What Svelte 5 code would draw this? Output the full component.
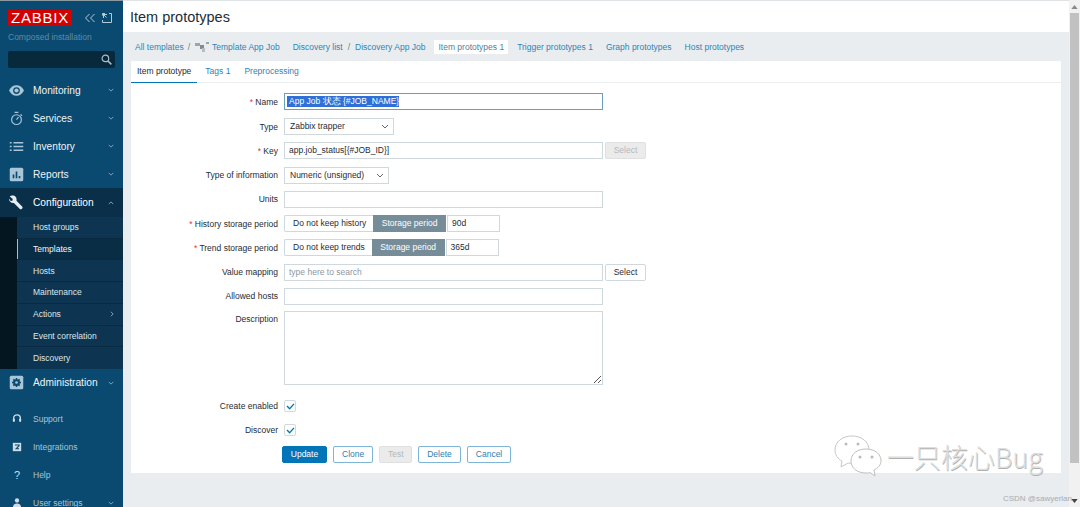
<script>
	const topMenu = [
		{ label: 'Monitoring', icon: 'eye' },
		{ label: 'Services', icon: 'clock' },
		{ label: 'Inventory', icon: 'list' },
		{ label: 'Reports', icon: 'chart' }
	];
	const subMenu = [
		{ label: 'Host groups' },
		{ label: 'Templates', current: true },
		{ label: 'Hosts' },
		{ label: 'Maintenance' },
		{ label: 'Actions', arrow: true },
		{ label: 'Event correlation' },
		{ label: 'Discovery' }
	];
	const navTabs = [
		{ label: 'Item prototypes 1', active: true },
		{ label: 'Trigger prototypes 1' },
		{ label: 'Graph prototypes' },
		{ label: 'Host prototypes' }
	];
</script>

{#snippet chevron(up)}
	<svg class="chev" viewBox="0 0 8 5" width="6" height="4">
		<path d={up ? 'M1 4 4 1l3 3' : 'M1 1l3 3 3-3'} fill="none" stroke="currentColor" stroke-width="1.2" />
	</svg>
{/snippet}

{#snippet menuIcon(name)}
	<svg class="micon" viewBox="0 0 20 20" width="20" height="20">
		{#if name === 'eye'}
			<path d="M0 10c2.500-4.500 5.800-7 10-7s7.500 2.500 10 7c-2.500 4.500-5.800 7-10 7s-7.500-2.500-10-7z" fill="currentColor" />
			<circle cx="10" cy="10" r="4.500" fill="#0b4a70" />
			<circle cx="10" cy="10" r="2.800" fill="currentColor" />
		{:else if name === 'clock'}
			<circle cx="10" cy="11.500" r="6.500" fill="none" stroke="currentColor" stroke-width="1.600" />
			<path d="M7.500 1.800h5M10 11.500l2.800-3.500M15.500 4.500l1.800 1.800" fill="none" stroke="currentColor" stroke-width="1.600" />
		{:else if name === 'list'}
			<path d="M1 5h2.500M1 10h2.500M1 15h2.500M6 5h13M6 10h13M6 15h13" fill="none" stroke="currentColor" stroke-width="2" />
		{:else if name === 'chart'}
			<rect x="1" y="1" width="18" height="18" rx="2" fill="currentColor" />
			<path d="M6 15v-5M10 15V6M14 15v-3" fill="none" stroke="#0b4a70" stroke-width="2.200" />
		{/if}
	</svg>
{/snippet}

<div class="page">
	<aside class="sidebar">
		<div class="brand">
			<div class="logo">ZABBIX</div>
			<svg class="collapse" viewBox="0 0 12 10" width="12" height="10">
				<path d="M5.500 1 1.500 5l4 4M10.500 1l-4 4 4 4" fill="none" stroke="currentColor" stroke-width="1" />
			</svg>
			<svg class="kiosk" viewBox="0 0 10 10" width="10" height="10">
				<path d="M3 .5H.5v2M7 .5h2.500v9H.5V7" fill="none" stroke="currentColor" stroke-width="1" />
				<path d="M1 1l3.500 3.500M1.500 5V1.500H5" fill="none" stroke="currentColor" stroke-width="1" />
			</svg>
		</div>
		<div class="server">Composed installation</div>
		<div class="search">
			<svg viewBox="0 0 12 12" width="11" height="11">
				<circle cx="4.800" cy="4.800" r="3.600" fill="none" stroke="currentColor" stroke-width="1.300" />
				<path d="M7.500 7.500 11.300 11.300" stroke="currentColor" stroke-width="1.600" />
			</svg>
		</div>

		<nav class="menu">
			{#each topMenu as item}
				<div class="mitem">
					{@render menuIcon(item.icon)}
					<span class="mlabel">{item.label}</span>
					{@render chevron(false)}
				</div>
			{/each}
			<div class="mitem open">
				<svg class="micon wrench" viewBox="0 0 20 20" width="20" height="20">
					<path d="M6 .8C3.800.3 2 .8 1 2l4 3.200-.5 2.300-2.300.5L.3 4.500C-.5 8 2.500 11 6.500 10.500l8 8.300c1.500 1.300 4.500-1.300 3.300-3.200L10 7.500C10.500 4 9 1.500 6 .8z" fill="currentColor" />
				</svg>
				<span class="mlabel">Configuration</span>
				{@render chevron(true)}
			</div>
			<div class="submenu">
				{#each subMenu as sub}
					<div class="sitem" class:current={sub.current}>
						<span>{sub.label}</span>
						{#if sub.arrow}
							<svg class="chev" viewBox="0 0 5 8" width="4" height="6">
								<path d="M1 1l3 3-3 3" fill="none" stroke="currentColor" stroke-width="1.200" />
							</svg>
						{/if}
					</div>
				{/each}
			</div>
			<div class="mitem admin">
				<svg class="micon" viewBox="0 0 20 20" width="20" height="20">
					<rect x="1" y="1" width="18" height="18" rx="2" fill="currentColor" />
					<circle cx="10" cy="10" r="4.500" fill="#0b4a70" />
					<path d="M10 4v3M10 13v3M4 10h3M13 10h3M5.800 5.800l2 2M12.200 12.200l2 2M14.200 5.800l-2 2M7.800 12.200l-2 2" stroke="#0b4a70" stroke-width="2" />
					<circle cx="10" cy="10" r="1.800" fill="currentColor" />
				</svg>
				<span class="mlabel">Administration</span>
				{@render chevron(false)}
			</div>
		</nav>

		<div class="user-menu">
			<div class="uitem">
				<svg viewBox="0 0 12 12" width="12" height="12">
					<path d="M2 7V5a4 4 0 0 1 8 0v2" fill="none" stroke="currentColor" stroke-width="1.600" />
					<rect x="1" y="5.500" width="2.500" height="4" rx="1" fill="currentColor" />
					<rect x="8.500" y="5.500" width="2.500" height="4" rx="1" fill="currentColor" />
				</svg>
				<span>Support</span>
			</div>
			<div class="uitem">
				<svg viewBox="0 0 12 12" width="12" height="12">
					<rect x="1" y="1" width="10" height="10" fill="currentColor" />
					<path d="M3.500 3.500h5v1L5 8h3.500" fill="none" stroke="#0b4a70" stroke-width="1.300" />
				</svg>
				<span>Integrations</span>
			</div>
			<div class="uitem">
				<b class="q">?</b>
				<span>Help</span>
			</div>
			<div class="uitem">
				<svg viewBox="0 0 12 12" width="12" height="12">
					<circle cx="6" cy="3" r="2.600" fill="currentColor" />
					<path d="M1 12c0-4 2-5.500 5-5.500s5 1.500 5 5.500z" fill="currentColor" />
				</svg>
				<span>User settings</span>
				{@render chevron(false)}
			</div>
		</div>
	</aside>

	<main class="content">
		<header class="title"><h1>Item prototypes</h1></header>

		<div class="crumbs">
			<a href="#t">All templates</a>
			<span class="sep">/</span>
			<svg class="tpl" viewBox="0 0 14 10" width="14" height="10">
				<rect x="0" y="1" width="5" height="3" fill="#9aa7b0" />
				<rect x="5" y="3" width="4" height="4" fill="#7d8b96" />
				<rect x="7" y="6" width="3" height="4" fill="#b4bec6" />
				<rect x="11" y="0" width="3" height="2" fill="#9aa7b0" />
			</svg>
			<a class="tname" href="#t">Template App Job</a>
			<a class="gap" href="#t">Discovery list</a>
			<span class="sep wide-sep">/</span>
			<a href="#t">Discovery App Job</a>
			{#each navTabs as tab}
				<a class="navtab" class:active={tab.active} href="#t">{tab.label}</a>
			{/each}
		</div>

		<section class="card">
			<div class="tabs">
				<span class="tab active">Item prototype</span>
				<span class="tab">Tags 1</span>
				<span class="tab">Preprocessing</span>
			</div>

			<form class="form">
				<div class="row first">
					<label class="lbl"><i>*</i> Name</label>
					<div class="field name"><span class="sel">App Job 状态 {'{'}#JOB_NAME{'}'}</span></div>
				</div>
				<div class="row">
					<label class="lbl">Type</label>
					<div class="field select w110">Zabbix trapper<svg class="chev" viewBox="0 0 8 5" width="8" height="5"><path d="M1 1l3 3 3-3" fill="none" stroke="currentColor" stroke-width="1" /></svg></div>
				</div>
				<div class="row">
					<label class="lbl"><i>*</i> Key</label>
					<div class="field wide">app.job_status[{'{'}#JOB_ID{'}'}]</div>
					<span class="btn2 off">Select</span>
				</div>
				<div class="row">
					<label class="lbl">Type of information</label>
					<div class="field select w105">Numeric (unsigned)<svg class="chev" viewBox="0 0 8 5" width="8" height="5"><path d="M1 1l3 3 3-3" fill="none" stroke="currentColor" stroke-width="1" /></svg></div>
				</div>
				<div class="row">
					<label class="lbl">Units</label>
					<div class="field wide"></div>
				</div>
				<div class="row">
					<label class="lbl"><i>*</i> History storage period</label>
					<div class="seg">
						<span>Do not keep history</span><span class="on">Storage period</span>
					</div>
					<div class="field period">90d</div>
				</div>
				<div class="row">
					<label class="lbl"><i>*</i> Trend storage period</label>
					<div class="seg">
						<span>Do not keep trends</span><span class="on">Storage period</span>
					</div>
					<div class="field period">365d</div>
				</div>
				<div class="row">
					<label class="lbl">Value mapping</label>
					<div class="field wide ph">type here to search</div>
					<span class="btn2">Select</span>
				</div>
				<div class="row hosts">
					<label class="lbl">Allowed hosts</label>
					<div class="field wide"></div>
				</div>
				<div class="row top">
					<label class="lbl">Description</label>
					<div class="field wide area">
						<svg viewBox="0 0 8 8" width="8" height="8"><path d="M8 1 1 8M8 5 5 8" stroke="#555" stroke-width="1" /></svg>
					</div>
				</div>
				<div class="row check first-check">
					<label class="lbl">Create enabled</label>
					<span class="box"><svg viewBox="0 0 10 8" width="9" height="7"><path d="M1 3.500 4 6.500 9 1" fill="none" stroke="#0275b8" stroke-width="1.500" /></svg></span>
				</div>
				<div class="row check">
					<label class="lbl">Discover</label>
					<span class="box"><svg viewBox="0 0 10 8" width="9" height="7"><path d="M1 3.500 4 6.500 9 1" fill="none" stroke="#0275b8" stroke-width="1.500" /></svg></span>
				</div>
				<div class="actions">
					<span class="btn primary">Update</span>
					<span class="btn">Clone</span>
					<span class="btn off">Test</span>
					<span class="btn">Delete</span>
					<span class="btn">Cancel</span>
				</div>
			</form>
		</section>

		<div class="watermark">
			<svg viewBox="0 0 50 44" width="50" height="44">
				<path d="M19 2C9 2 2 8 2 16c0 5 3 9 7 11l-1 6 7-4c2 .5 4 .5 6 .5C31 29.500 36 23 36 16 36 8 29 2 19 2z" fill="#fff" stroke="#c8c8c8" />
				<path d="M33 15c-9 0-15 5-15 12s6 12 15 12c2 0 3 0 4-.500l5 3.500-1-6c4-2 7-5 7-9 0-7-6-12-15-12z" fill="#fff" stroke="#c0c0c0" />
				<circle cx="13" cy="10" r="1.500" fill="#bbb" />
				<circle cx="25" cy="10" r="1.500" fill="#bbb" />
				<circle cx="27" cy="23" r="1.500" fill="#bbb" />
				<circle cx="39" cy="23" r="1.500" fill="#bbb" />
			</svg>
			<span>一只核心Bug</span>
		</div>
		<div class="csdn">CSDN @sawyerlan</div>
	</main>

	<div class="scrollbar">
		<svg class="arrow up" viewBox="0 0 8 5" width="7" height="4"><path d="M4 0l4 5H0z" fill="#8a8a8a" /></svg>
		<span class="thumb"></span>
		<svg class="arrow down" viewBox="0 0 8 5" width="7" height="4"><path d="M4 5 8 0H0z" fill="#444" /></svg>
	</div>
</div>

<style>
	:global(body) {
		margin: 0;
		overflow: hidden;
	}

	.page {
		display: flex;
		width: 1080px;
		height: 507px;
		overflow: hidden;
		font-family: 'Liberation Sans', Arial, sans-serif;
		font-size: 8.5px;
		color: #1f2c33;
		background: #e9edf0;
	}

	.sidebar {
		width: 123px;
		flex: none;
		background: #0b4a70;
		color: #f2f6f8;
		box-sizing: border-box;
		border-top: 1px solid #8a9aa3;
		display: flex;
		flex-direction: column;
	}

	.sidebar > * { flex: none; }

	.brand {
		display: flex;
		align-items: center;
		padding: 9px 0 0 8px;
		height: 16px;
		color: #b5cbd8;
	}

	.logo {
		width: 64px;
		height: 16px;
		background: #d40000;
		color: #fff;
		font-size: 15px;
		line-height: 16px;
		text-align: center;
		letter-spacing: 0.8px;
	}

	.collapse { margin-left: 12px; }
	.kiosk { margin-left: 6px; }

	.server {
		margin: 5px 0 0 8px;
		color: #5d8aa5;
		line-height: 12px;
	}

	.search {
		margin: 8px 0 0 8px;
		width: 107px;
		height: 17px;
		background: #08283c;
		border-radius: 2px;
		display: flex;
		align-items: center;
		justify-content: flex-end;
		padding-right: 3px;
		box-sizing: border-box;
		color: #a9bcc8;
	}

	.menu { margin-top: 8px; }

	.mitem {
		height: 28px;
		display: flex;
		align-items: center;
		padding: 0 9px;
		box-sizing: border-box;
		color: #eef3f6;
		font-size: 10.2px;
	}

	.micon {
		color: #a9c6d8;
		width: 15px;
		height: 15px;
		margin-right: 9px;
		flex: none;
	}

	.mlabel { flex: 1; }

	.chev { color: #8eacbe; flex: none; }

	.mitem.open {
		background: #0a3049;
		color: #fff;
		height: 29px;
	}

	.wrench { color: #e6edf1; }

	.submenu {
		margin-left: 17px;
		background: #0d3552;
		box-shadow: -17px 0 0 #04161f;
	}

	.sitem {
		height: 21.71px;
		box-sizing: border-box;
		padding: 0 9px 0 16px;
		display: flex;
		align-items: center;
		justify-content: space-between;
		color: #dce6ec;
		border-bottom: 1px solid #0a2a42;
	}

	.sitem:last-child { border-bottom: none; }

	.sitem.current {
		background: #0a2d46;
		color: #f2f6f8;
		box-shadow: inset 1px 0 0 #8cc6ea;
	}

	.user-menu { margin-top: 8px; }

	.uitem {
		height: 28px;
		display: flex;
		align-items: center;
		padding: 0 9px 0 12px;
		box-sizing: border-box;
		color: #a9c4d4;
	}

	.uitem svg:first-child,
	.q {
		width: 10px;
		height: 10px;
		margin-right: 11px;
		flex: none;
		color: #cfdde5;
	}

	.q {
		text-align: center;
		font-weight: normal;
		font-size: 11px;
		line-height: 10px;
	}

	.uitem span { flex: 1; }

	.content {
		flex: 1;
		min-width: 0;
		border-top: 1px solid #dfe3e6;
		position: relative;
	}

	.title {
		height: 31px;
		background: #fff;
		display: flex;
		align-items: center;
		padding-left: 7px;
		margin-bottom: 1px;
	}

	h1 {
		margin: 0;
		font-size: 14.5px;
		font-weight: normal;
		color: #1f2c33;
	}

	.crumbs {
		height: 28px;
		display: flex;
		align-items: center;
		padding-left: 12px;
		box-sizing: border-box;
		color: #6b7c86;
	}

	.crumbs a {
		color: #2f84b5;
		text-decoration: none;
	}

	.sep { margin: 0 4px; }
	.wide-sep { margin: 0 5px; }
	.tpl { margin: 0 3px 0 1px; }
	.gap { margin-left: 13px; }

	.navtab {
		padding: 0 4px;
		margin-left: 5px;
		height: 14px;
		line-height: 14px;
	}

	.crumbs .navtab.active {
		background: #fff;
		color: #4f7f9e;
		margin-left: 9px;
	}

	.card {
		background: #fff;
		margin-left: 8px;
		width: 930px;
	}

	.tabs {
		height: 21px;
		display: flex;
		border-bottom: 1px solid #ebeef0;
	}

	.tab {
		padding: 0 7px;
		line-height: 21px;
		color: #2f84b5;
	}

	.tab.active {
		padding: 0 6px;
		color: #1f2c33;
		height: 21px;
		box-shadow: 0 1px 0 #0275b8;
		margin-right: 1px;
	}

	.form { padding-top: 10px; }

	.row {
		display: flex;
		align-items: center;
		min-height: 17px;
		margin-bottom: 7.25px;
	}

	.row.first { margin-bottom: 8px; }
	.row.hosts { margin-bottom: 6.5px; }
	.row.top { align-items: flex-start; }
	.row.top .lbl { padding-top: 3px; }

	.lbl {
		width: 147px;
		text-align: right;
		margin-right: 6px;
		flex: none;
		color: #1f2c33;
	}

	.lbl i {
		color: #e33734;
		font-style: normal;
	}

	.field {
		height: 17px;
		box-sizing: border-box;
		border: 1px solid #cfd8dd;
		background: #fff;
		line-height: 15px;
		padding: 0 4px;
		display: flex;
		align-items: center;
		color: #1f2c33;
	}

	.wide { width: 319px; }

	.name {
		width: 319px;
		border-color: #6c9dbc;
		padding: 0 2px;
	}

	.sel {
		background: #2f6fd6;
		color: #fff;
		line-height: 11px;
		padding-left: 2px;
	}

	.select {
		justify-content: space-between;
		padding: 0 4px 0 5px;
	}

	.w110 { width: 110px; }
	.w105 { width: 105px; }
	.select .chev { color: #5a6a73; }

	.ph { color: #8b989f; }

	.btn2 {
		height: 17px;
		width: 41px;
		margin-left: 2px;
		box-sizing: border-box;
		border: 1px solid #cfd8dd;
		line-height: 15px;
		text-align: center;
		border-radius: 2px;
		color: #1f2c33;
	}

	.btn2.off {
		background: #ebebeb;
		color: #b5b9bb;
		border-color: #e0e0e0;
	}

	.seg {
		display: flex;
		height: 17px;
		box-sizing: border-box;
		border: 1px solid #cfd8dd;
		border-right: none;
		border-radius: 2px 0 0 2px;
	}

	.seg span {
		padding: 0 7px 0 8px;
		line-height: 15px;
	}

	.seg .on {
		background: #768d99;
		color: #fff;
		margin: -1px 0;
		line-height: 17px;
		padding: 0 8.5px;
	}

	.period { width: 53px; margin-left: 1px; }

	.area {
		height: 74px;
		align-items: flex-end;
		justify-content: flex-end;
		padding: 1px;
	}

	.check { min-height: 14px; margin-bottom: 10px; }
	.first-check { margin-top: 14px; }

	.box {
		width: 12px;
		height: 12px;
		box-sizing: border-box;
		border: 1px solid #cfd8dd;
		border-radius: 2px;
		display: flex;
		align-items: center;
		justify-content: center;
	}

	.actions {
		display: flex;
		gap: 6px;
		margin-top: -1px;
		padding: 0 0 10px 151px;
	}

	.btn {
		height: 17px;
		box-sizing: border-box;
		border: 1px solid #7eb4d6;
		border-radius: 2px;
		padding: 0 8px;
		line-height: 15px;
		color: #2b7fb2;
		min-width: 40px;
		text-align: center;
	}

	.btn.primary {
		background: #0275b8;
		border-color: #0275b8;
		color: #fff;
		width: 45px;
		padding: 0;
	}

	.btn.off {
		background: #ebebeb;
		border-color: #e0e0e0;
		color: #b5b9bb;
		width: 33px;
		min-width: 0;
		padding: 0;
	}

	.watermark {
		position: absolute;
		left: 710px;
		top: 433px;
		display: flex;
		align-items: center;
		gap: 4px;
		color: #dedede;
		font-family: 'Noto Sans CJK SC', sans-serif;
		font-size: 27px;
		font-weight: 300;
		text-shadow: 0.6px 0.6px 0 #b0b0b0;
	}

	.csdn {
		position: absolute;
		right: -3px;
		bottom: 4px;
		z-index: 1;
		color: #a5acb0;
		font-size: 8px;
	}

	.scrollbar {
		width: 11px;
		flex: none;
		background: #f1f1f1;
		position: relative;
	}

	.thumb {
		position: absolute;
		left: 1px;
		right: 1px;
		top: 13px;
		height: 450px;
		background: #c1c1c1;
	}

	.arrow {
		position: absolute;
		left: 2px;
	}

	.arrow.up { top: 5px; }
	.arrow.down { bottom: 4px; }
</style>
